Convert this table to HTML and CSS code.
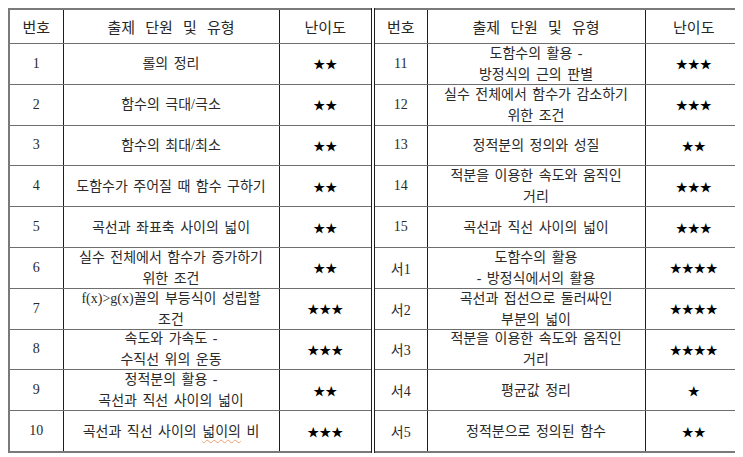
FILE: index.html
```html
<!DOCTYPE html>
<html lang="ko">
<head>
<meta charset="utf-8">
<title>출제 단원 및 유형</title>
<link rel="stylesheet" href="styles.css">
</head>
<body>
<table class="grid">
  <colgroup>
    <col class="c-no"><col class="c-unit"><col class="c-lvl">
    <col class="c-no2"><col class="c-unit2"><col class="c-lvl2">
  </colgroup>
  <thead>
    <tr class="head">
      <th>번호</th><th class="wide">출제 단원 및 유형</th><th class="mid">난이도</th>
      <th>번호</th><th class="wide">출제 단원 및 유형</th><th>난이도</th>
    </tr>
  </thead>
  <tbody>
    <tr>
      <td class="no">1</td><td class="unit"><div class="cell"><span>롤의 정리</span></div></td><td class="lvl mid">★★</td>
      <td class="no">11</td><td class="unit"><div class="cell"><span>도함수의 활용 -</span><span>방정식의 근의 판별</span></div></td><td class="lvl">★★★</td>
    </tr>
    <tr>
      <td class="no">2</td><td class="unit"><div class="cell"><span>함수의 극대/극소</span></div></td><td class="lvl mid">★★</td>
      <td class="no">12</td><td class="unit"><div class="cell"><span>실수 전체에서 함수가 감소하기</span><span>위한 조건</span></div></td><td class="lvl">★★★</td>
    </tr>
    <tr>
      <td class="no">3</td><td class="unit"><div class="cell"><span>함수의 최대/최소</span></div></td><td class="lvl mid">★★</td>
      <td class="no">13</td><td class="unit"><div class="cell"><span>정적분의 정의와 성질</span></div></td><td class="lvl">★★</td>
    </tr>
    <tr>
      <td class="no">4</td><td class="unit"><div class="cell"><span>도함수가 주어질 때 함수 구하기</span></div></td><td class="lvl mid">★★</td>
      <td class="no">14</td><td class="unit"><div class="cell"><span>적분을 이용한 속도와 움직인</span><span>거리</span></div></td><td class="lvl">★★★</td>
    </tr>
    <tr>
      <td class="no">5</td><td class="unit"><div class="cell"><span>곡선과 좌표축 사이의 넓이</span></div></td><td class="lvl mid">★★</td>
      <td class="no">15</td><td class="unit"><div class="cell"><span>곡선과 직선 사이의 넓이</span></div></td><td class="lvl">★★★</td>
    </tr>
    <tr>
      <td class="no">6</td><td class="unit"><div class="cell"><span>실수 전체에서 함수가 증가하기</span><span>위한 조건</span></div></td><td class="lvl mid">★★</td>
      <td class="no">서1</td><td class="unit"><div class="cell"><span>도함수의 활용</span><span>- 방정식에서의 활용</span></div></td><td class="lvl">★★★★</td>
    </tr>
    <tr>
      <td class="no">7</td><td class="unit"><div class="cell"><span>f(x)&gt;g(x)꼴의 부등식이 성립할</span><span>조건</span></div></td><td class="lvl mid">★★★</td>
      <td class="no">서2</td><td class="unit"><div class="cell"><span>곡선과 접선으로 둘러싸인</span><span>부분의 넓이</span></div></td><td class="lvl">★★★★</td>
    </tr>
    <tr>
      <td class="no">8</td><td class="unit"><div class="cell"><span>속도와 가속도 -</span><span>수직선 위의 운동</span></div></td><td class="lvl mid">★★★</td>
      <td class="no">서3</td><td class="unit"><div class="cell"><span>적분을 이용한 속도와 움직인</span><span>거리</span></div></td><td class="lvl">★★★★</td>
    </tr>
    <tr>
      <td class="no">9</td><td class="unit"><div class="cell"><span>정적분의 활용 -</span><span>곡선과 직선 사이의 넓이</span></div></td><td class="lvl mid">★★</td>
      <td class="no">서4</td><td class="unit"><div class="cell"><span>평균값 정리</span></div></td><td class="lvl">★</td>
    </tr>
    <tr>
      <td class="no">10</td><td class="unit"><div class="cell"><span>곡선과 직선 사이의 <span class="spell">넓이의</span> 비</span></div></td><td class="lvl mid">★★★</td>
      <td class="no">서5</td><td class="unit"><div class="cell"><span>정적분으로 정의된 함수</span></div></td><td class="lvl">★★</td>
    </tr>
  </tbody>
</table>
</body>
</html>
```
FILE: styles.css
```css
html, body {
  background: #ffffff;
}
body {
  margin: 8px;
  font-family: "Liberation Serif", "Noto Sans CJK KR", serif;
  color: #2a2a2a;
}
.grid {
  border-collapse: collapse;
  table-layout: fixed;
  width: 734px;
  border: 2px solid #7a7a7a;
}
.c-no { width: 54px; }
.c-unit { width: 216px; }
.c-lvl { width: 94px; }
.c-no2 { width: 54px; }
.c-unit2 { width: 218px; }
.c-lvl2 { width: 98px; }

.grid th, .grid td {
  padding: 0;
  text-align: center;
  vertical-align: middle;
  border-left: 1px solid #1e1e1e;
  border-right: 1px solid #1e1e1e;
  border-bottom: 1px solid #6e6e6e;
  border-top: 1px solid #6e6e6e;
}
.grid th.mid, .grid td.mid {
  border-right: 4px double #1e1e1e;
}
.head th {
  height: 33px;
  font-family: "Noto Sans CJK KR", sans-serif;
  font-weight: 400;
  font-size: 15px;
  color: #262626;
  word-spacing: 6px;
}
.grid tbody td {
  height: 39.8px;
}
.no {
  font-size: 14px;
}
.unit {
  font-size: 14px;
  word-spacing: 2px;
}
.cell {
  height: 38px;
  display: flex;
  flex-direction: column;
  justify-content: center;
  align-items: center;
  line-height: 21px;
  white-space: nowrap;
}
.spell {
  text-decoration: underline wavy #e8a070;
  text-decoration-thickness: 1px;
  text-underline-offset: 3px;
}
.lvl {
  font-family: "Noto Sans CJK KR", sans-serif;
  font-size: 12px;
  color: #000;
}
```
